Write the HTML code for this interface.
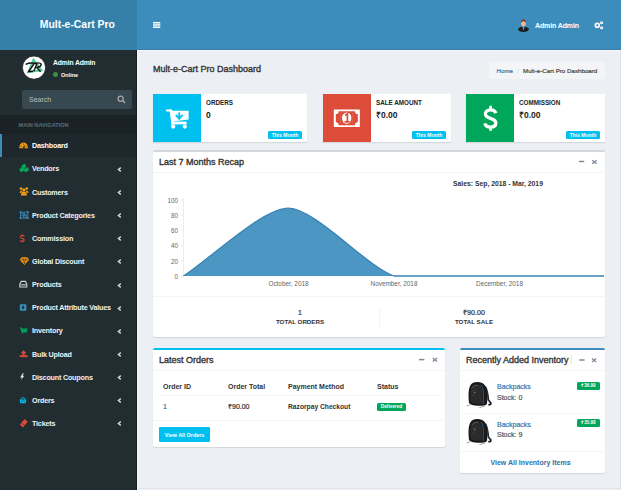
<!DOCTYPE html>
<html><head><meta charset="utf-8">
<style>
*{margin:0;padding:0;box-sizing:border-box}
html,body{width:621px;height:490px;overflow:hidden;background:#ecf0f5;font-family:"Liberation Sans",sans-serif;color:#333}
.a{position:absolute;white-space:nowrap}
.t{position:absolute;white-space:nowrap;line-height:10px;height:10px}
#logo{left:0;top:0;width:137px;height:50px;background:#367fa9}
#nav{left:137px;top:0;width:484px;height:50px;background:#3c8dbc}
#sidebar{left:0;top:50px;width:136px;height:440px;background:#222d32}
#sbline{left:136px;top:50px;width:1px;height:440px;background:#151b1e}
.mi{position:absolute;left:32px;font-size:7.2px;letter-spacing:-0.2px;font-weight:bold;color:#eef2f4;line-height:10px;height:10px}
.chev{position:absolute;left:117px;width:5px;height:5px}
.box{position:absolute;background:#fff;box-shadow:0 1px 1px rgba(0,0,0,.1)}
.sb{-webkit-text-stroke:0.35px currentColor}
.sb2{-webkit-text-stroke:0.2px currentColor}
.lbl{position:absolute;background:#00c0ef;color:#fff;font-weight:bold;border-radius:1.5px;text-align:center}
</style></head><body>
<!-- header -->
<div id="logo" class="a"></div>
<div class="t" style="left:39.8px;top:19.2px;font-size:10.4px;font-weight:bold;color:#fff;line-height:12px;height:12px">Mult-e-Cart Pro</div>
<div id="nav" class="a"></div>
<div class="a" style="left:0;top:49px;width:621px;height:1px;background:#3580ac"></div>
<div class="a" style="left:137px;top:50px;width:484px;height:1px;background:#f6f8fb"></div>
<div class="a" style="left:137px;top:50px;width:1px;height:440px;background:#f6f8fb"></div>
<!-- hamburger -->
<svg class="a" style="left:150px;top:20px" width="14" height="10" viewBox="150 20 14 10"><path d="M153 22.7H160.3M153 25H160.3M153 27.3H160.3" stroke="#fff" stroke-width="1.4"/></svg>
<!-- user avatar header -->
<svg class="a" style="left:517px;top:18px" width="13" height="14" viewBox="0 0 13 14">
  <ellipse cx="6.5" cy="11.3" rx="5.3" ry="2.7" fill="#1d1d1d"/>
  <path d="M5.2 8.6 L6.5 12.6 L7.8 8.6Z" fill="#5aa0dc"/>
  <ellipse cx="6.5" cy="5.6" rx="2.4" ry="3" fill="#f0b596"/>
  <path d="M4 5 Q3.9 1.6 6.5 1.6 Q9.1 1.6 9 5 Q8.4 3.2 6.5 3.3 Q4.6 3.2 4 5Z" fill="#8a3216"/>
</svg>
<div class="t" style="left:535px;top:21px;font-size:7px;letter-spacing:-0.12px;font-weight:bold;color:#fff">Admin Admin</div>
<!-- gears -->
<svg class="a" style="left:590px;top:18px" width="16" height="14" viewBox="590 18 16 14">
  <circle cx="597.3" cy="25.3" r="1.95" fill="none" stroke="#fff" stroke-width="1.7"/>
  <circle cx="601.6" cy="22.7" r="1.55" fill="#fff"/>
  <circle cx="601.6" cy="27.7" r="1.55" fill="#fff"/>
  <circle cx="601.6" cy="22.7" r="0.45" fill="#3c8dbc"/>
  <circle cx="601.6" cy="27.7" r="0.45" fill="#3c8dbc"/>
</svg>

<!-- sidebar -->
<div id="sidebar" class="a"></div>
<div id="sbline" class="a"></div>
<!-- user panel -->
<svg class="a" style="left:20px;top:54px" width="28" height="28" viewBox="20 54 28 28">
  <circle cx="34" cy="67.6" r="11.6" fill="#fff" stroke="#111" stroke-width="0.8"/>
  <path d="M33.2 57.6 L43.4 71 L27 73.2Z" fill="#52d19b"/>
  <path d="M33.4 62 L38.8 69.6 L30.2 70.8Z" fill="#fff"/>
  <path d="M25.6 64.4 Q30 62.4 34.4 63.2 L28.6 71.6 Q31 71.4 33 71.2" fill="none" stroke="#111" stroke-width="1.5"/>
  <path d="M34.4 63.4 Q40 62 41.2 64.2 Q41.4 66.4 36.8 67.6 L40.6 71.8 M37 63.4 L33.8 71.2" fill="none" stroke="#111" stroke-width="1.4"/>
</svg>
<div class="t" style="left:53px;top:57.5px;font-size:6.8px;letter-spacing:-0.15px;font-weight:bold;color:#fff">Admin Admin</div>
<div class="a" style="left:53.4px;top:72.2px;width:5px;height:5px;border-radius:50%;background:#3a8f45"></div>
<div class="t" style="left:61px;top:70px;font-size:5.5px;font-weight:bold;color:#fff">Online</div>
<!-- search -->
<div class="a" style="left:22px;top:90px;width:110px;height:19px;background:#374850;border-radius:2px"></div>
<div class="t" style="left:29px;top:95px;font-size:7px;color:#b5bfc4">Search</div>
<svg class="a" style="left:117px;top:95px" width="9" height="9" viewBox="0 0 9 9">
  <circle cx="3.7" cy="3.7" r="2.6" fill="none" stroke="#aaa" stroke-width="1.2"/>
  <path d="M5.6 5.6 L8 8" stroke="#aaa" stroke-width="1.4"/>
</svg>
<!-- nav header -->
<div class="a" style="left:0;top:115px;width:136px;height:19px;background:#1a2226"></div>
<div class="t" style="left:18.5px;top:120px;font-size:5.6px;font-weight:bold;color:#57707b">MAIN NAVIGATION</div>
<!-- active item -->
<div class="a" style="left:0;top:134px;width:136px;height:23px;background:#1e282c"></div>
<div class="a" style="left:0;top:134px;width:2px;height:23px;background:#3c8dbc"></div>

<div class="mi" style="top:141.2px;color:#fff">Dashboard</div>
<div class="mi" style="top:164.3px;color:#eef2f4">Vendors</div>
<svg class="chev" style="top:166.8px" viewBox="0 0 5 5"><path d="M3.8 0.6 L1.4 2.5 L3.8 4.4" fill="none" stroke="#d3dde2" stroke-width="1.35"/></svg>
<div class="mi" style="top:187.5px;color:#eef2f4">Customers</div>
<svg class="chev" style="top:190.0px" viewBox="0 0 5 5"><path d="M3.8 0.6 L1.4 2.5 L3.8 4.4" fill="none" stroke="#d3dde2" stroke-width="1.35"/></svg>
<div class="mi" style="top:210.6px;color:#eef2f4">Product Categories</div>
<svg class="chev" style="top:213.1px" viewBox="0 0 5 5"><path d="M3.8 0.6 L1.4 2.5 L3.8 4.4" fill="none" stroke="#d3dde2" stroke-width="1.35"/></svg>
<div class="mi" style="top:233.8px;color:#eef2f4">Commission</div>
<svg class="chev" style="top:236.3px" viewBox="0 0 5 5"><path d="M3.8 0.6 L1.4 2.5 L3.8 4.4" fill="none" stroke="#d3dde2" stroke-width="1.35"/></svg>
<div class="mi" style="top:256.9px;color:#eef2f4">Global Discount</div>
<svg class="chev" style="top:259.4px" viewBox="0 0 5 5"><path d="M3.8 0.6 L1.4 2.5 L3.8 4.4" fill="none" stroke="#d3dde2" stroke-width="1.35"/></svg>
<div class="mi" style="top:280.0px;color:#eef2f4">Products</div>
<svg class="chev" style="top:282.5px" viewBox="0 0 5 5"><path d="M3.8 0.6 L1.4 2.5 L3.8 4.4" fill="none" stroke="#d3dde2" stroke-width="1.35"/></svg>
<div class="mi" style="top:303.2px;color:#eef2f4">Product Attribute Values</div>
<svg class="chev" style="top:305.7px" viewBox="0 0 5 5"><path d="M3.8 0.6 L1.4 2.5 L3.8 4.4" fill="none" stroke="#d3dde2" stroke-width="1.35"/></svg>
<div class="mi" style="top:326.3px;color:#eef2f4">Inventory</div>
<svg class="chev" style="top:328.8px" viewBox="0 0 5 5"><path d="M3.8 0.6 L1.4 2.5 L3.8 4.4" fill="none" stroke="#d3dde2" stroke-width="1.35"/></svg>
<div class="mi" style="top:349.5px;color:#eef2f4">Bulk Upload</div>
<svg class="chev" style="top:352.0px" viewBox="0 0 5 5"><path d="M3.8 0.6 L1.4 2.5 L3.8 4.4" fill="none" stroke="#d3dde2" stroke-width="1.35"/></svg>
<div class="mi" style="top:372.6px;color:#eef2f4">Discount Coupons</div>
<svg class="chev" style="top:375.1px" viewBox="0 0 5 5"><path d="M3.8 0.6 L1.4 2.5 L3.8 4.4" fill="none" stroke="#d3dde2" stroke-width="1.35"/></svg>
<div class="mi" style="top:395.7px;color:#eef2f4">Orders</div>
<svg class="chev" style="top:398.2px" viewBox="0 0 5 5"><path d="M3.8 0.6 L1.4 2.5 L3.8 4.4" fill="none" stroke="#d3dde2" stroke-width="1.35"/></svg>
<div class="mi" style="top:418.9px;color:#eef2f4">Tickets</div>
<svg class="chev" style="top:421.4px" viewBox="0 0 5 5"><path d="M3.8 0.6 L1.4 2.5 L3.8 4.4" fill="none" stroke="#d3dde2" stroke-width="1.35"/></svg>



<!-- sidebar icons -->
<svg class="a" style="left:14px;top:130px" width="20" height="305" viewBox="14 130 20 305">
  <!-- dashboard tachometer -->
  <path d="M19.3 148.3 C19.3 144.6 21.2 142.5 23.6 142.5 C26 142.5 27.9 144.6 27.9 148.3 Z" fill="#f39c12"/>
  <path d="M22.9 148.2 L24.2 144.4 L24.9 148.2Z" fill="#1e282c"/>
  <circle cx="21.1" cy="146.2" r="0.55" fill="#1e282c"/><circle cx="26.1" cy="146.2" r="0.55" fill="#1e282c"/><circle cx="23.6" cy="143.9" r="0.5" fill="#1e282c"/>
  <!-- vendors -->
  <g fill="#00a65a">
    <rect x="21.6" y="164.4" width="4.4" height="3.6" rx="1.2" transform="rotate(-35 23.8 166.2)"/>
    <rect x="19.6" y="167.6" width="4.6" height="3.8" rx="1.2" transform="rotate(-35 21.9 169.5)"/>
    <rect x="24" y="167.8" width="4.8" height="3.8" rx="1.2" transform="rotate(-35 26.4 169.7)"/>
  </g>
  <!-- customers -->
  <g fill="#f39c12">
    <circle cx="21" cy="188.6" r="1.3"/><circle cx="26.8" cy="188.6" r="1.3"/>
    <circle cx="23.9" cy="190" r="1.7"/>
    <path d="M19.6 193 Q19.6 190.4 21.4 190.4 L22 191.5 L21.4 193Z"/>
    <path d="M28.4 193 Q28.4 190.4 26.6 190.4 L26 191.5 L26.6 193Z"/>
    <path d="M20.9 195.6 Q20.9 191.8 23.9 191.8 Q26.9 191.8 26.9 195.6Z"/>
  </g>
  <!-- product categories (object-group) -->
  <g fill="none" stroke="#3c8dbc" stroke-width="0.8">
    <rect x="20.4" y="212.1" width="7.4" height="6"/>
    <rect x="22" y="213.6" width="2.8" height="2.3"/>
    <rect x="23.6" y="215" width="2.8" height="2.3"/>
  </g>
  <g fill="#3c8dbc"><rect x="19.6" y="211.3" width="1.7" height="1.7"/><rect x="27" y="211.3" width="1.7" height="1.7"/><rect x="19.6" y="217.3" width="1.7" height="1.7"/><rect x="27" y="217.3" width="1.7" height="1.7"/></g>
  <!-- commission $ -->
  <path d="M22.3 234.2 V235.6 M22.3 241 V242.4" stroke="#dd4b39" stroke-width="1.1"/>
  <path d="M24.2 236.6 C23.8 235.8 23.2 235.5 22.3 235.5 C21.2 235.5 20.5 236.1 20.5 236.9 C20.5 239.2 24.2 237.8 24.2 240 C24.2 240.8 23.4 241.3 22.3 241.3 C21.3 241.3 20.6 240.8 20.3 240.2" fill="none" stroke="#dd4b39" stroke-width="1.2"/>
  <!-- global discount gem -->
  <path d="M21.6 257.2 H27.2 L29.1 259.8 L24.4 265.1 L19.7 259.8Z" fill="#f39c12"/>
  <path d="M20.8 259.8 H28 M22.8 258 L24.4 264 L26 258" fill="none" stroke="#222d32" stroke-width="0.55"/>
  <circle cx="24.4" cy="261" r="0.9" fill="#dd4b39"/>
  <!-- products (hdd) -->
  <path d="M19.8 284.2 L21.2 281.4 H25.4 L26.8 284.2 V287 H19.8Z" fill="none" stroke="#c9d3d8" stroke-width="1.1"/>
  <path d="M20.6 284.8 H26" stroke="#c9d3d8" stroke-width="1.1"/>
  <!-- product attribute values -->
  <rect x="19.8" y="304.2" width="6.6" height="6.6" rx="0.8" fill="#3c8dbc"/>
  <path d="M23.1 305.6 L24.6 307.5 L23.1 309.4 L21.6 307.5Z" fill="#1e282c"/>
  <!-- inventory (cart-like green) -->
  <path d="M20.1 327.9 L21 328 L22.4 333.4 M21.3 329 H27 L26 332 H22.2" fill="none" stroke="#00a65a" stroke-width="1.1"/>
  <rect x="22" y="329.2" width="4.4" height="2.6" fill="#00a65a"/>
  <!-- bulk upload -->
  <path d="M23.6 350.2 L26.4 353.2 H24.6 V355.2 H22.6 V353.2 H20.8Z" fill="#dd4b39"/>
  <rect x="19.7" y="355.2" width="7.8" height="1.9" fill="#dd4b39"/>
  <!-- bolt -->
  <path d="M22.6 373.2 L20.2 377.6 H22 L20.8 380.6 L24.2 375.8 H22.4 L23.8 373.2Z" fill="#e4eaed"/>
  <!-- orders (bag) -->
  <path d="M19.6 399.4 H26.4 L25.6 403.2 H20.4Z" fill="#00c0ef"/>
  <path d="M21.3 399.6 V398.4 Q23 396.6 24.7 398.4 V399.6" fill="none" stroke="#00c0ef" stroke-width="0.9"/>
  <rect x="21.6" y="400.3" width="0.7" height="1.8" fill="#222d32"/><rect x="23.7" y="400.3" width="0.7" height="1.8" fill="#222d32"/>
  <!-- tickets -->
  <path d="M19.9 424.6 L24.6 419 L27.7 421.8 L23 427.4Z" fill="#dd4b39"/>
  <path d="M21.6 423 L25.4 426" stroke="#222d32" stroke-width="0.5"/>
</svg>
<!-- content -->
<div class="a" style="left:620px;top:51px;width:1px;height:439px;background:#e0e4ea"></div>
<div class="a" style="left:138px;top:488px;width:483px;height:1px;background:#e1e5ea"></div>
<div class="t sb" style="left:153px;top:64px;font-size:9px;color:#333;line-height:10px">Mult-e-Cart Pro Dashboard</div>
<div class="a" style="left:489px;top:62px;width:116px;height:17px;background:#f4f5f7;border-radius:2px"></div>
<div class="t sb2" style="left:496.5px;top:66px;font-size:6.2px;color:#3a78ad">Home</div>
<div class="t" style="left:517px;top:66px;font-size:6px;color:#ccc">/</div>
<div class="t sb2" style="left:523px;top:66px;font-size:6.2px;color:#444">Mult-e-Cart Pro Dashboard</div>

<!-- info boxes -->
<div class="box" style="left:153px;top:94px;width:154px;height:48px"></div>
<div class="a" style="left:153px;top:94px;width:48px;height:48px;background:#00c0ef"></div>
<div class="t" style="left:206px;top:97.5px;font-size:6.3px;font-weight:bold;color:#222">ORDERS</div>
<div class="t" style="left:206px;top:110px;font-size:8.5px;font-weight:bold;color:#222">0</div>
<div class="lbl" style="left:268px;top:131px;width:34px;height:8px;font-size:5px;line-height:8px">This Month</div>

<div class="box" style="left:323px;top:94px;width:128px;height:48px"></div>
<div class="a" style="left:323px;top:94px;width:48px;height:48px;background:#dd4b39"></div>
<div class="t" style="left:376px;top:97.5px;font-size:6.3px;font-weight:bold;color:#222">SALE AMOUNT</div>
<div class="t" style="left:376px;top:110px;font-size:8.5px;font-weight:bold;color:#222">&#8377;0.00</div>
<div class="lbl" style="left:412px;top:131px;width:34px;height:8px;font-size:5px;line-height:8px">This Month</div>

<div class="box" style="left:466px;top:94px;width:139px;height:48px"></div>
<div class="a" style="left:466px;top:94px;width:48px;height:48px;background:#00a65a"></div>
<div class="t" style="left:519px;top:97.5px;font-size:6.3px;font-weight:bold;color:#222">COMMISSION</div>
<div class="t" style="left:519px;top:110px;font-size:8.5px;font-weight:bold;color:#222">&#8377;0.00</div>
<div class="lbl" style="left:566px;top:131px;width:34px;height:8px;font-size:5px;line-height:8px">This Month</div>

<!-- chart box -->
<div class="box" style="left:153px;top:150px;width:452px;height:187px;border-top:2px solid #d2d6de;border-radius:2px"></div>
<div class="t sb" style="left:159px;top:156.5px;font-size:9px;color:#333">Last 7 Months Recap</div>
<div class="a" style="left:153px;top:172px;width:452px;height:1px;background:#f4f4f4"></div>
<div class="t" style="left:453px;top:178.5px;font-size:6.8px;font-weight:bold;color:#333">Sales: Sep, 2018 - Mar, 2019</div>
<div class="a" style="left:153px;top:296px;width:452px;height:1px;background:#f4f4f4"></div>
<div class="a" style="left:379px;top:307px;width:1px;height:20px;background:#f4f4f4"></div>
<div class="t sb2" style="left:260px;top:307.8px;width:80px;text-align:center;font-size:7px;color:#333">1</div>
<div class="t" style="left:260px;top:317px;width:80px;text-align:center;font-size:6.2px;font-weight:bold;color:#333">TOTAL ORDERS</div>
<div class="t sb2" style="left:434px;top:307.6px;width:80px;text-align:center;font-size:7.2px;color:#333">&#8377;90.00</div>
<div class="t" style="left:434px;top:317px;width:80px;text-align:center;font-size:6.2px;font-weight:bold;color:#333">TOTAL SALE</div>


<!-- chart -->
<svg class="a" style="left:153px;top:190px" width="452" height="100" viewBox="153 190 452 100">
  <g font-family="Liberation Sans" font-size="6.3" fill="#666" text-anchor="end">
    <text x="178" y="202.7">100</text>
    <text x="178" y="217.9">80</text>
    <text x="178" y="233.1">60</text>
    <text x="178" y="248.3">40</text>
    <text x="178" y="263.5">20</text>
    <text x="178" y="278.7">0</text>
  </g>
  <path d="M183.5 198 V276" stroke="#ececec" stroke-width="1"/>
  <path d="M181 200H183.5M181 215.2H183.5M181 230.4H183.5M181 245.6H183.5M181 260.8H183.5M181 276H183.5" stroke="#ececec" stroke-width="1"/>
  <path d="M183.5 276 C209.75 259 262.25 208.2 288.5 208.2 C314.9 208.2 367.6 267.5 394 276 L604 276 Z" fill="#4c96c3"/>
  <path d="M183.5 276 C209.75 259 262.25 208.2 288.5 208.2 C314.9 208.2 367.6 267.5 394 276 L604 276" fill="none" stroke="#3a83b5" stroke-width="1.3"/>
  <g font-family="Liberation Sans" font-size="6.4" fill="#666" text-anchor="middle">
    <text x="288.5" y="285.5">October, 2018</text>
    <text x="394" y="285.5">November, 2018</text>
    <text x="499.5" y="285.5">December, 2018</text>
  </g>
</svg>
<!-- latest orders -->
<div class="box" style="left:153px;top:348px;width:292px;height:99px;border-top:2px solid #00c0ef;border-radius:2px"></div>
<div class="t sb" style="left:159px;top:354.5px;font-size:9px;color:#333">Latest Orders</div>
<div class="a" style="left:153px;top:370px;width:292px;height:1px;background:#f4f4f4"></div>
<div class="t" style="left:163px;top:381.5px;font-size:7px;font-weight:bold;color:#333">Order ID</div>
<div class="t" style="left:228px;top:381.5px;font-size:7px;font-weight:bold;color:#333">Order Total</div>
<div class="t" style="left:288px;top:381.5px;font-size:7px;font-weight:bold;color:#333">Payment Method</div>
<div class="t" style="left:377px;top:381.5px;font-size:7px;font-weight:bold;color:#333">Status</div>
<div class="a" style="left:158px;top:395px;width:283px;height:1px;background:#f4f4f4"></div>
<div class="t" style="left:163px;top:401.5px;font-size:7px;font-weight:bold;color:#3c8dbc">1</div>
<div class="t sb2" style="left:228px;top:401.5px;font-size:7px;color:#333">&#8377;90.00</div>
<div class="t" style="left:288px;top:401.5px;font-size:6.7px;font-weight:bold;color:#333">Razorpay Checkout</div>
<div class="lbl" style="left:377px;top:402.5px;width:29px;height:8.5px;font-size:4.8px;line-height:8.5px;background:#00a65a">Delivered</div>
<div class="a" style="left:153px;top:420px;width:292px;height:1px;background:#f4f4f4"></div>
<div class="a" style="left:159px;top:427px;width:51px;height:15px;background:#00c0ef;border-radius:1px"></div>
<div class="t" style="left:159px;top:429.5px;width:51px;text-align:center;font-size:5.4px;font-weight:bold;color:#fff">View All Orders</div>

<!-- inventory -->
<div class="box" style="left:460px;top:348px;width:145px;height:125px;border-top:2px solid #3c8dbc;border-radius:2px"></div>
<div class="t sb" style="left:466px;top:354.5px;font-size:9px;color:#333">Recently Added Inventory</div>
<div class="a" style="left:460px;top:370px;width:145px;height:1px;background:#f4f4f4"></div>
<div class="t sb2" style="left:497px;top:382.3px;font-size:7px;color:#3478b0">Backpacks</div>
<div class="t sb2" style="left:497px;top:392.5px;font-size:7px;color:#555">Stock: 0</div>
<div class="lbl" style="left:577px;top:382px;width:23px;height:7.5px;font-size:4.5px;line-height:7.5px;background:#00a65a">&#8377;36.99</div>
<div class="a" style="left:466px;top:413px;width:134px;height:1px;background:#f4f4f4"></div>
<div class="t sb2" style="left:497px;top:419.5px;font-size:7px;color:#3478b0">Backpacks</div>
<div class="t sb2" style="left:497px;top:430px;font-size:7px;color:#555">Stock: 9</div>
<div class="lbl" style="left:577px;top:419px;width:23px;height:7.5px;font-size:4.5px;line-height:7.5px;background:#00a65a">&#8377;35.98</div>
<div class="a" style="left:460px;top:451px;width:145px;height:1px;background:#f4f4f4"></div>
<div class="t" style="left:460px;top:457.5px;width:141px;text-align:center;font-size:7px;font-weight:bold;color:#3070a8">View All Inventory Items</div>

<!-- info icons -->
<svg class="a" style="left:153px;top:94px" width="48" height="48" viewBox="153 94 48 48">
  <rect x="165.8" y="109.4" width="5.6" height="2.2" rx="0.8" fill="#fff"/>
  <path d="M169.4 109.6 L172 109.6 L174.2 124.6 L171.4 124.6Z" fill="#fff"/>
  <path d="M171 110.8 L188.6 110.8 L188.6 119.4 L172.6 121.4Z" fill="#fff"/>
  <rect x="171.2" y="121.6" width="15.4" height="2.8" fill="#fff"/>
  <circle cx="173.2" cy="126.6" r="2.1" fill="#fff"/>
  <circle cx="184.8" cy="126.6" r="2.1" fill="#fff"/>
  <path d="M179.2 112.4 V117.8" stroke="#00c0ef" stroke-width="1.8"/>
  <path d="M175.8 114.8 L179.2 118.8 L182.6 114.8" fill="none" stroke="#00c0ef" stroke-width="1.8"/>
</svg>
<svg class="a" style="left:323px;top:94px" width="48" height="48" viewBox="323 94 48 48">
  <rect x="333.8" y="109.5" width="26" height="17.5" fill="#fff"/>
  <path d="M338.6 111.2 H355 A2.6 2.6 0 0 0 357.8 114 V122.2 A2.6 2.6 0 0 0 355 125.2 H338.6 A2.6 2.6 0 0 0 335.8 122.2 V114 A2.6 2.6 0 0 0 338.6 111.2Z" fill="#dd4b39"/>
  <path d="M341.2 112.5 Q339.2 118.2 341.2 123.9 M352.2 112.5 Q354.2 118.2 352.2 123.9" fill="none" stroke="#e8786b" stroke-width="0.5"/>
  <ellipse cx="346.7" cy="118.1" rx="4.7" ry="5.7" fill="#fff"/>
  <path d="M345 115.2 L347.4 113.8 V121.6 M344.6 121.8 H349.6" fill="none" stroke="#dd4b39" stroke-width="1.7"/>
</svg>
<svg class="a" style="left:466px;top:94px" width="48" height="48" viewBox="466 94 48 48">
  <path d="M490.6 105.8 V110.2 M490.6 126.6 V130.8" stroke="#fff" stroke-width="2.6"/>
  <path d="M496 113.2 C495 110.8 493.2 109.8 490.5 109.8 C487.3 109.8 485.4 111.6 485.4 114 C485.4 116.6 487.6 117.4 490.5 118.3 C493.8 119.3 495.8 120.4 495.8 123 C495.8 125.6 493.6 127.1 490.5 127.1 C487.6 127.1 485.4 125.8 484.8 123.4" fill="none" stroke="#fff" stroke-width="3.3"/>
</svg>

<!-- box tools -->
<svg class="a" style="left:576px;top:157px" width="24" height="10" viewBox="576 157 24 10">
  <path d="M579 161.5 H584.2" stroke="#7d8a9c" stroke-width="1.5"/>
  <path d="M592.2 160.2 L596.6 163.8 M596.6 160.2 L592.2 163.8" stroke="#7d8a9c" stroke-width="1.3"/>
</svg>
<svg class="a" style="left:416px;top:355px" width="24" height="10" viewBox="416 355 24 10">
  <path d="M419 359.6 H424.4" stroke="#7d8a9c" stroke-width="1.5"/>
  <path d="M432.8 358 L437 361.6 M437 358 L432.8 361.6" stroke="#7d8a9c" stroke-width="1.3"/>
</svg>
<svg class="a" style="left:570px;top:354px" width="30" height="12" viewBox="570 354 30 12">
  <rect x="570.5" y="355" width="1.5" height="9" fill="#fbe6c6"/>
  <path d="M579.3 360 H584.6" stroke="#7d8a9c" stroke-width="1.5"/>
  <path d="M592 358.4 L596.2 362 M596.2 358.4 L592 362" stroke="#7d8a9c" stroke-width="1.3"/>
</svg>
<!-- backpacks -->
<svg class="a" style="left:464px;top:379px" width="30" height="30" viewBox="0 0 30 30">
  <defs><g id="bp">
  <path d="M21.4 8 C23.6 12 24 17 24.4 21 L26.8 24 C27.4 25.6 25.8 26.2 24.4 25.2" fill="none" stroke="#1c1c1c" stroke-width="1.7"/>
  <path d="M22 9.5 C23.4 13 23.6 17 24 21 L26 23.8" fill="none" stroke="#2f5f90" stroke-width="0.6"/>
  <path d="M5 24 C4.2 17 4.2 11 6 7 C7.8 3.4 11 2.8 14 3 C18 3.2 21 5 22.4 9 C23.6 13 23.6 19 23 25 C21 26.8 17 27 13.5 26.8 C9.5 26.6 6.5 26 5 24Z" fill="#1a1a1a"/>
  <path d="M6.4 22.4 C5.8 16 6.4 10 8.8 7 C10.8 5 14.4 5 16.6 7 C18.6 10 18.9 17 18.2 24.2 C14 25.2 9 24.8 6.4 22.4Z" fill="#2b2b2b"/>
  <path d="M16.9 5.6 C19.6 9 20.1 16 19.1 25" fill="none" stroke="#2d6096" stroke-width="0.9"/>
  <path d="M7.6 9.6 C9 6.8 11.8 6 14.2 6.4" fill="none" stroke="#6a6a6a" stroke-width="0.7"/>
  <path d="M8.4 13 L12.4 10.6 M8 17 L11 15.6" fill="none" stroke="#4a4a4a" stroke-width="0.6"/>
  <circle cx="10.8" cy="13.6" r="0.7" fill="#8a9aa8"/>
  <path d="M2.6 27 L6.6 25.6 M15.4 28.6 L21.4 26.8" stroke="#7a7a7a" stroke-width="0.7"/>
  </g></defs>
  <use href="#bp"/>
</svg>
<svg class="a" style="left:464px;top:416px" width="30" height="30" viewBox="0 0 30 30"><use href="#bp"/></svg>
</body></html>
